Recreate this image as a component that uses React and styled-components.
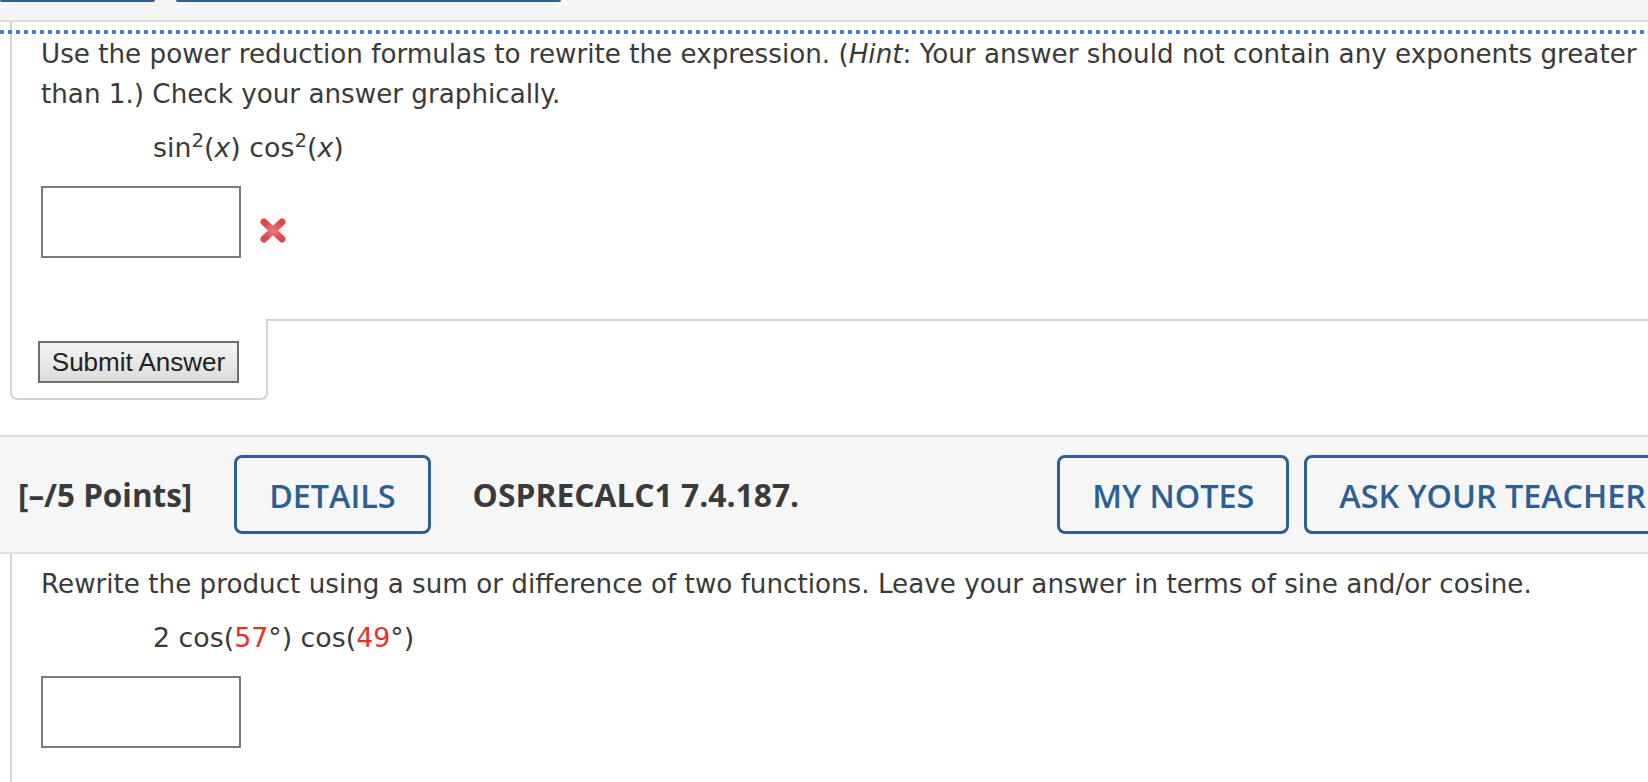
import React from "react";
import styled, { createGlobalStyle } from "styled-components";

const BLUE = "#2c6094";
const TEXT = "#3a3a3a";
const RULE = "#d3d3d3";

const Global = createGlobalStyle`
  html, body { margin: 0; padding: 0; background: #fff; overflow: hidden; }
  body { font-family: "DejaVu Sans", Verdana, sans-serif; color: ${TEXT}; }
`;

const Page = styled.div`
  width: 1699px;
`;

const TopBar = styled.div`
  height: 20px;
  background: #f5f5f5;
  border-bottom: 2px solid #dcdcdc;
  display: flex;
  align-items: flex-start;
  gap: 21px;
`;

const Stub = styled.div`
  width: ${(p) => p.$w}px;
  height: 0;
  border-bottom: 2px solid ${BLUE};
  border-radius: 0 0 4px 4px;
`;

const QuestionBody = styled.div`
  margin-left: 10px;
  border-left: 2px solid ${RULE};
  padding: ${(p) => p.$pt}px 0 ${(p) => p.$pb}px 29px;
`;

const DottedRule = styled.div`
  height: 4px;
  margin-left: -41px;
  background: repeating-linear-gradient(to right, #3f82dc 0 4px, transparent 4px 8px);
`;

const Prompt = styled.p`
  margin: 0;
  width: 1620px;
  font-size: 26.2px;
  line-height: 40px;
`;

const MathLine = styled.div`
  margin: 14px 0 0 112px;
  font-size: 26.8px;
  line-height: 40px;
`;

const Sup = styled.sup`
  font-size: 0.74em;
  line-height: 0;
  vertical-align: 0.5em;
`;

const Var = styled.i`
  font-style: italic;
`;

const Given = styled.span`
  color: #e8312a;
`;

const AnswerRow = styled.div`
  display: flex;
  align-items: flex-start;
  gap: 18px;
  margin-top: 18px;
`;

const AnswerInput = styled.input`
  width: 200px;
  height: 72px;
  box-sizing: border-box;
  border: 2px solid #7b7b7b;
  border-radius: 0;
  margin: 0;
  padding: 0 8px;
  font: inherit;
  background: #fff;
  outline: none;
`;

const Mark = styled.svg`
  margin-top: 31px;
  flex: none;
`;

const BottomRow = styled.div`
  display: flex;
  margin-left: 10px;
`;

const SubmitCell = styled.div`
  width: 258px;
  box-sizing: border-box;
  border: 2px solid ${RULE};
  border-top: none;
  border-radius: 0 0 7px 7px;
  padding: 22px 0 15px 26px;
`;

const Filler = styled.div`
  flex: 1;
  border-top: 2px solid ${RULE};
`;

const SubmitButton = styled.button`
  width: 201px;
  height: 42px;
  box-sizing: border-box;
  border: 2px solid #6e6e6e;
  border-radius: 0;
  background: linear-gradient(#f4f4f4, #dcdcdc);
  font-family: "Liberation Sans", Arial, sans-serif;
  font-size: 26px;
  color: #222;
  padding: 0;
`;

const QHeader = styled.div`
  margin-top: 35px;
  height: 115px;
  display: flex;
  align-items: center;
  background: #f6f6f6;
  border-top: 2px solid #dedede;
  border-bottom: 2px solid #dedede;
  padding: 0 18px;
`;

const Strong = styled.span`
  font-family: "Open Sans", sans-serif;
  font-weight: 700;
  font-size: ${(p) => p.$fs || 31.8}px;
  color: ${TEXT};
  white-space: nowrap;
  margin-left: ${(p) => p.$ml || 0}px;
`;

const HeaderButton = styled.button`
  height: 79px;
  box-sizing: border-box;
  border: 3px solid ${BLUE};
  border-radius: 8px;
  background: transparent;
  color: ${BLUE};
  font-family: "Open Sans", sans-serif;
  font-weight: 600;
  font-size: 32.3px;
  padding: 0 32px;
  white-space: nowrap;
  margin-left: ${(p) => p.$ml || 0}px;
`;

const Grow = styled.div`
  flex: 1;
`;

function WrongIcon() {
  return (
    <Mark width="28" height="27" viewBox="0 0 28 27">
      <defs>
        <radialGradient id="xg" cx="50%" cy="50%" r="60%">
          <stop offset="0%" stopColor="#f07a7a" />
          <stop offset="100%" stopColor="#dd4848" />
        </radialGradient>
      </defs>
      <path d="M5 5 L23 22 M23 5 L5 22" stroke="url(#xg)" strokeWidth="7" strokeLinecap="round" fill="none" />
    </Mark>
  );
}

export default function App() {
  return (
    <Page>
      <Global />
      <TopBar>
        <Stub $w={155} />
        <Stub $w={385} />
      </TopBar>

      <QuestionBody $pt={8} $pb={61}>
        <DottedRule />
        <Prompt>
          Use the power reduction formulas to rewrite the expression. (<Var>Hint</Var>: Your answer should not contain any exponents greater than 1.) Check your answer graphically.
        </Prompt>
        <MathLine>
          sin<Sup>2</Sup>(<Var>x</Var>) cos<Sup>2</Sup>(<Var>x</Var>)
        </MathLine>
        <AnswerRow>
          <AnswerInput type="text" aria-label="answer" />
          <WrongIcon />
        </AnswerRow>
      </QuestionBody>
      <BottomRow>
        <SubmitCell>
          <SubmitButton>Submit Answer</SubmitButton>
        </SubmitCell>
        <Filler />
      </BottomRow>

      <QHeader>
        <Strong $fs={31.4}>[–/5 Points]</Strong>
        <HeaderButton $ml={42}>DETAILS</HeaderButton>
        <Strong $ml={42}>OSPRECALC1 7.4.187.</Strong>
        <Grow />
        <HeaderButton>MY NOTES</HeaderButton>
        <HeaderButton $ml={15}>ASK YOUR TEACHER</HeaderButton>
      </QHeader>

      <QuestionBody $pt={10} $pb={40}>
        <Prompt>
          Rewrite the product using a sum or difference of two functions. Leave your answer in terms of sine and/or cosine.
        </Prompt>
        <MathLine>
          2 cos(<Given>57</Given>°) cos(<Given>49</Given>°)
        </MathLine>
        <AnswerRow>
          <AnswerInput type="text" aria-label="answer" />
        </AnswerRow>
      </QuestionBody>
    </Page>
  );
}
